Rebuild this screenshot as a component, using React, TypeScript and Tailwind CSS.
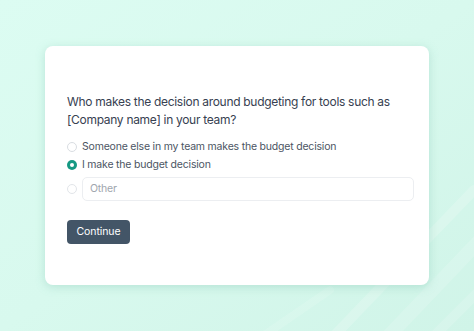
import React from "react";

export default function App() {
  return (
    <div className="w-[474px] h-[331px] bg-[#d9faef] overflow-hidden relative" style={{ fontFamily: "Inter, 'Noto Sans', sans-serif" }}>
      <div className="absolute inset-0 bg-gradient-to-br from-[#dcfcf2] via-[#d8f9ee] to-[#d0f4e8]" />
      <svg className="absolute inset-0" width="474" height="331" viewBox="0 0 474 331">
        <g stroke="#ffffff" strokeOpacity="0.18" strokeWidth="10" fill="none" strokeLinecap="round">
          <path d="M330 340 L474 190" />
          <path d="M380 345 L480 240" strokeOpacity="0.14" strokeWidth="14" />
          <path d="M250 345 L330 290" strokeOpacity="0.12" strokeWidth="8" />
          <path d="M430 340 L480 290" strokeOpacity="0.15" />
        </g>
      </svg>
      <div className="relative pt-[46px] pl-[45px]">
        <div className="w-[384px] h-[239px] bg-white rounded-[8px] shadow-[0_2px_10px_rgba(120,190,170,0.35)] pl-[22px] pr-[15px] pt-[47px]">
          <p className="text-[12px] tracking-[-0.3px] leading-[18px] text-[#374151] whitespace-nowrap">
            Who makes the decision around budgeting for tools such as<br />[Company name] in your team?
          </p>
          <div className="mt-[9px] flex flex-col">
            <label className="flex items-center h-[18px] gap-[5px]">
              <span className="w-[10px] h-[10px] rounded-full border border-[#d9dde2] bg-white" />
              <span className="text-[10.5px] tracking-[-0.2px] text-[#4b5563]">Someone else in my team makes the budget decision</span>
            </label>
            <label className="flex items-center h-[18px] gap-[5px]">
              <span className="w-[10px] h-[10px] rounded-full bg-[#169983] flex items-center justify-center">
                <span className="w-[4px] h-[4px] rounded-full bg-white" />
              </span>
              <span className="text-[10.5px] tracking-[-0.2px] text-[#4b5563]">I make the budget decision</span>
            </label>
            <label className="flex items-center gap-[5px] mt-[3px]">
              <span className="w-[10px] h-[10px] rounded-full border border-[#e2e5e9] bg-white" />
              <span className="flex-1 h-[24px] rounded-[5px] border border-[#eceef1] flex items-center pl-[7px] text-[10.5px] tracking-[-0.2px] text-[#a0a6ae]">Other</span>
            </label>
          </div>
          <button className="mt-[19px] w-[63px] h-[24px] rounded-[4px] bg-[#435567] text-white text-[10.5px] tracking-[-0.1px] flex items-center justify-center">Continue</button>
        </div>
      </div>
    </div>
  );
}
